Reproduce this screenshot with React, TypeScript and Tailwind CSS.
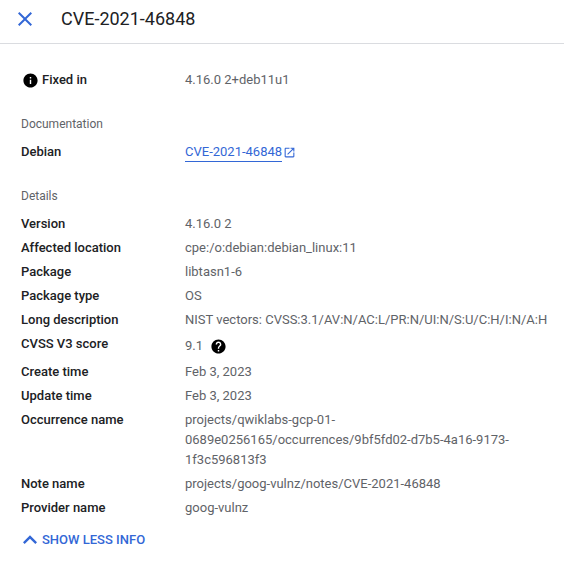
import React from 'react';

const Row = ({ label, children }: { label: string; children: React.ReactNode }) => (
  <div className="flex py-[2px]">
    <div className="w-[164px] shrink-0 font-medium text-[#202124]">{label}</div>
    <div className="flex-1 min-w-0 text-[#5f6368]">{children}</div>
  </div>
);

export default function App() {
  return (
    <div className="w-[564px] h-[565px] overflow-hidden bg-white font-['Roboto',sans-serif] text-[13px] leading-5">
      <div className="h-[44px] pb-[6px] flex items-center border-b border-[#dadce0]">
        <button className="w-[50px] pl-[13px] text-[#3367d6]">
          <svg width="24" height="24" viewBox="0 0 24 24" fill="currentColor">
            <path d="M19 6.41 17.59 5 12 10.59 6.41 5 5 6.41 10.59 12 5 17.59 6.41 19 12 13.41 17.59 19 19 17.59 13.41 12z" />
          </svg>
        </button>
        <div className="ml-[11px] text-[18px] text-[#202124]">CVE-2021-46848</div>
      </div>

      <div className="px-[21px] pt-[26px]">
        <div className="flex items-center">
          <div className="w-[164px] shrink-0 flex items-center font-medium text-[#202124]">
            <svg className="ml-px mr-[3px]" width="17" height="17" viewBox="0 0 24 24" fill="#000">
              <path d="M12 2C6.48 2 2 6.48 2 12s4.48 10 10 10 10-4.48 10-10S17.52 2 12 2zm1 15h-2v-6h2v6zm0-8h-2V7h2v2z" />
            </svg>
            Fixed in
          </div>
          <div className="text-[#5f6368]">4.16.0 2+deb11u1</div>
        </div>

        <div className="mt-[24px] text-[12px] text-[#5f6368]">Documentation</div>
        <div className="mt-[6px]">
          <Row label="Debian">
            <span className="inline-flex items-center text-[#3367d6]">
              <a className="border-b border-[#3367d6] leading-[19px]">CVE-2021-46848</a>
              <svg className="ml-px" width="13" height="13" viewBox="0 0 24 24" fill="currentColor">
                <path d="M19 19H5V5h7V3H5c-1.11 0-2 .9-2 2v14c0 1.1.89 2 2 2h14c1.1 0 2-.9 2-2v-7h-2v7zM14 3v2h3.59l-9.83 9.83 1.41 1.41L19 6.41V10h2V3h-7z" />
              </svg>
            </span>
          </Row>
        </div>

        <div className="mt-[22px] text-[12px] text-[#5f6368]">Details</div>
        <div className="mt-[6px]">
          <Row label="Version">4.16.0 2</Row>
          <Row label="Affected location">cpe:/o:debian:debian_linux:11</Row>
          <Row label="Package">libtasn1-6</Row>
          <Row label="Package type">OS</Row>
          <Row label="Long description">
            <span className="whitespace-nowrap">NIST vectors: CVSS:3.1/AV:N/AC:L/PR:N/UI:N/S:U/C:H/I:N/A:H</span>
          </Row>
          <Row label="CVSS V3 score">
            <div className="flex items-center h-6">
              9.1
              <svg className="ml-[7px]" width="17" height="17" viewBox="0 0 24 24" fill="#000">
                <path d="M12 2C6.48 2 2 6.48 2 12s4.48 10 10 10 10-4.48 10-10S17.52 2 12 2zm1 17h-2v-2h2v2zm2.07-7.75-.9.92C13.45 12.9 13 13.5 13 15h-2v-.5c0-1.1.45-2.1 1.17-2.83l1.24-1.26c.37-.36.59-.86.59-1.41 0-1.1-.9-2-2-2s-2 .9-2 2H8c0-2.21 1.79-4 4-4s4 1.79 4 4c0 .88-.36 1.68-.93 2.25z" />
              </svg>
            </div>
          </Row>
          <Row label="Create time">Feb 3, 2023</Row>
          <Row label="Update time">Feb 3, 2023</Row>
          <Row label="Occurrence name">projects/qwiklabs-gcp-01-0689e0256165/occurrences/9bf5fd02-d7b5-4a16-9173-1f3c596813f3</Row>
          <Row label="Note name">projects/goog-vulnz/notes/CVE-2021-46848</Row>
          <Row label="Provider name">goog-vulnz</Row>
        </div>

        <button className="mt-[10px] flex items-center font-medium text-[#3367d6]">
          <svg className="-ml-[5px] -my-1 mr-[-2px]" width="28" height="28" viewBox="0 0 24 24" fill="currentColor">
            <path d="M7.41 15.41 12 10.83l4.59 4.58L18 14l-6-6-6 6z" />
          </svg>
          SHOW LESS INFO
        </button>
      </div>
    </div>
  );
}
